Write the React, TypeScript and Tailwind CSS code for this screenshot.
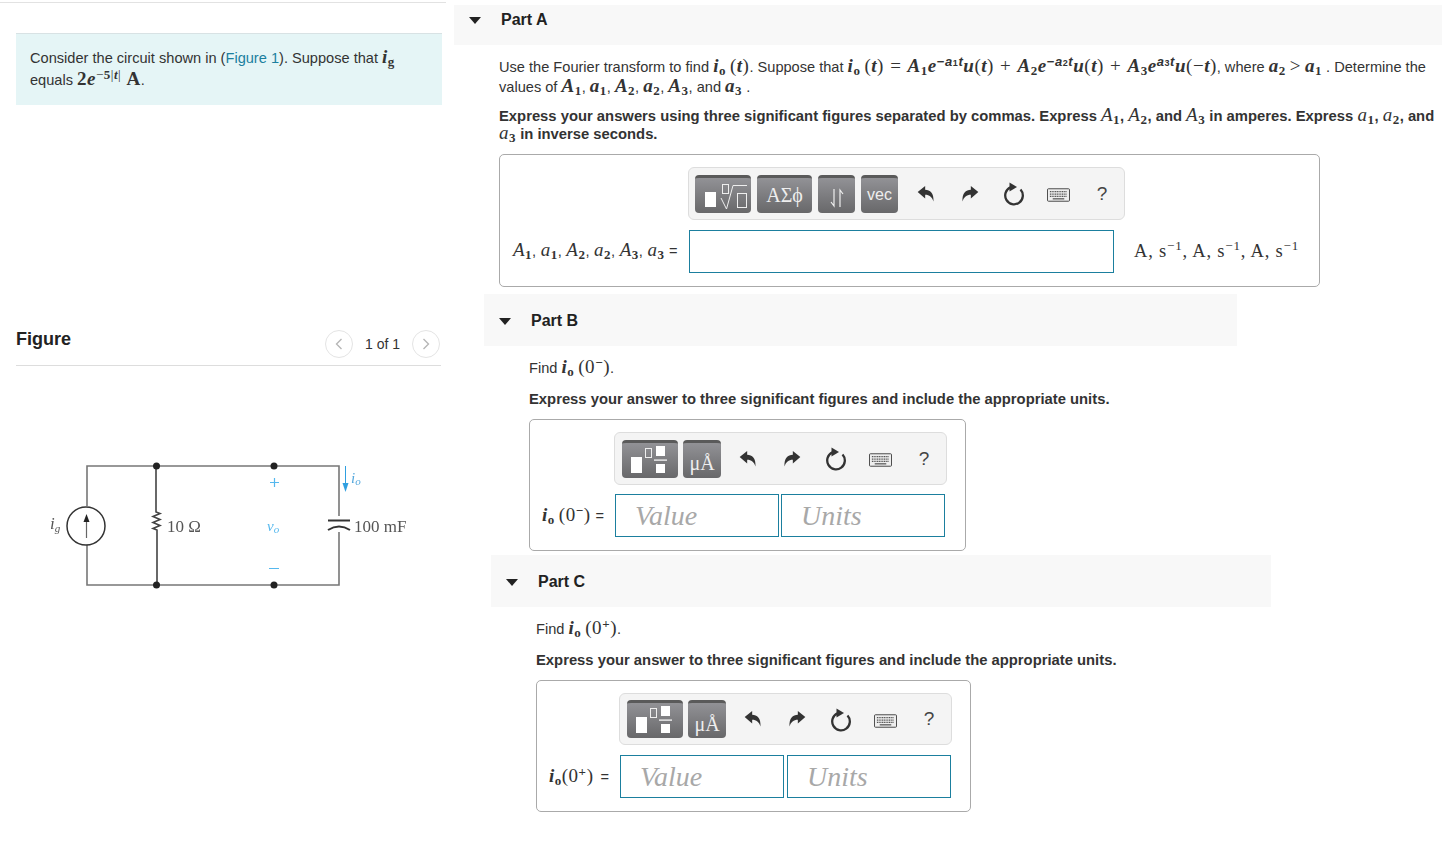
import type { ReactNode } from "react";

const serif = "font-['Liberation_Serif','Times_New_Roman',serif]";

// math text, roughly how MathJax draws it
function M({ children, bold = true }: { children: ReactNode; bold?: boolean }) {
  return (
    <span className={`font-['Liberation_Serif',serif] italic text-[19px] tracking-[0.5px] leading-[0] ${bold ? "font-bold" : "font-normal"}`}>
      {children}
    </span>
  );
}

function R({ children }: { children: ReactNode }) {
  return <span className="font-['Liberation_Serif',serif] not-italic text-[19px] tracking-[0.5px] leading-[0]">{children}</span>;
}

function Sub({ children }: { children: ReactNode }) {
  return <sub className="text-[13px] not-italic font-bold">{children}</sub>;
}

function Sup({ children }: { children: ReactNode }) {
  return <sup className="text-[13px] font-bold tracking-[0.6px]">{children}</sup>;
}

function Op({ children }: { children: ReactNode }) {
  return (
    <span className="mx-[1px]">
      <R>{children}</R>
    </span>
  );
}

function Undo() {
  return (
    <svg viewBox="0 0 24 24" className="w-[20px] h-[20px]" fill="#333">
      <path d="M2 9.5 11 2.5V7c6 0 10.5 4 10 14-1.600-5-5-8-10-8v4.500z" />
    </svg>
  );
}

function Redo() {
  return (
    <svg viewBox="0 0 24 24" className="w-[20px] h-[20px]" fill="#333">
      <path d="M22 9.500 13 2.500V7C7 7 2.500 11 3 21c1.600-5 5-8 10-8v4.500z" />
    </svg>
  );
}

function Reset() {
  return (
    <svg viewBox="0 0 24 24" className="w-[24px] h-[24px] mt-[1px]" fill="none" stroke="#333" strokeWidth="2.300">
      <path d="M18.500 7.500A8.800 8.800 0 1 1 8.500 5.400" />
      <path d="M7.500 0.500 15 5 7.500 9.500z" fill="#333" stroke="none" />
    </svg>
  );
}

function Keyboard() {
  return (
    <svg viewBox="0 0 24 14" className="w-[23px] h-[14px] mt-[3px]">
      <rect x="0.500" y="0.500" width="23" height="13" rx="1" fill="#eee" stroke="#444" />
      <path d="M3 3.500H21M3 6H21M3 8.500H21" stroke="#555" strokeWidth="1.300" strokeDasharray="1.200 .6" />
      <path d="M6 11H18" stroke="#555" strokeWidth="1.300" />
    </svg>
  );
}

function ToolIcons() {
  const cell = "w-[44px] flex items-center justify-center";
  return (
    <div className="flex items-center">
      <div className={cell}>
        <Undo />
      </div>
      <div className={cell}>
        <Redo />
      </div>
      <div className={cell}>
        <Reset />
      </div>
      <div className={cell}>
        <Keyboard />
      </div>
      <div className={cell}>
        <span className="text-[19px] text-[#444] mt-[1px]">?</span>
      </div>
    </div>
  );
}

function MathBtn({ className, children }: { className: string; children: ReactNode }) {
  return (
    <div
      className={`h-[38px] shrink-0 flex items-center justify-center rounded-[4px] border-t-[3px] border-t-[#5a5a5a] bg-linear-to-b from-[#929296] to-[#68686a] text-[#eee] overflow-hidden ${className}`}
    >
      {children}
    </div>
  );
}

function TemplateIcon() {
  return (
    <svg viewBox="0 0 56 35" className="w-[56px] h-[35px]">
      <rect x="9" y="14" width="11" height="16" fill="#fff" />
      <rect x="23.500" y="5.500" width="6" height="9" fill="none" stroke="#eee" />
      <rect x="34" y="3" width="9" height="10" fill="#fff" />
      <rect x="32" y="16.500" width="13" height="1.200" fill="#fff" />
      <rect x="34" y="21" width="9" height="9" fill="#fff" />
    </svg>
  );
}

function RootIcon() {
  return (
    <svg viewBox="0 0 56 35" className="w-[56px] h-[35px]">
      <rect x="10" y="14" width="11" height="15" fill="#fff" />
      <rect x="27.500" y="6.500" width="6" height="9" fill="none" stroke="#eee" />
      <path d="M26 20 31.500 31 38 7.500H52" fill="none" stroke="#eee" />
      <rect x="42.500" y="15.500" width="9" height="14" fill="none" stroke="#eee" />
    </svg>
  );
}

function ArrowsIcon() {
  return (
    <svg viewBox="0 0 18 22" className="w-[18px] h-[22px] mt-[6px]" fill="none" stroke="#eee" strokeWidth="1.200">
      <path d="M6 2V19L3 15" />
      <path d="M12 20V3L15 7" />
    </svg>
  );
}

function UnitBtns() {
  return (
    <>
      <MathBtn className="w-[56px]">
        <TemplateIcon />
      </MathBtn>
      <MathBtn className="w-[38px]">
        <span className={`${serif} text-[20px] pt-[6px]`}>μÅ</span>
      </MathBtn>
    </>
  );
}

function ValueUnits({ unitsGap }: { unitsGap: string }) {
  const cls = `w-[164px] h-[43px] border border-[#1b7f9e] px-[19px] outline-none ${serif} italic text-[28px] placeholder:text-[#a8a8a8]`;
  return (
    <div className={`flex ${unitsGap}`}>
      <input className={cls} placeholder="Value" />
      <input className={cls} placeholder="Units" />
    </div>
  );
}

function PartHeader({ label, className }: { label: string; className: string }) {
  return (
    <div className={`flex items-center bg-[#f8f8f8] ${className}`}>
      <span className="w-0 h-0 ml-[15px] border-x-[6.500px] border-x-transparent border-t-[7px] border-t-[#222]" />
      <span className="ml-[20px] font-bold text-[16px] text-[#222]">{label}</span>
    </div>
  );
}

function Circuit() {
  return (
    <svg viewBox="0 0 400 150" className="w-[400px] h-[150px] blur-[0.4px]">
      <g fill="none" stroke="#777" strokeWidth="1.600">
        <path d="M57 56V16H309V66M309 82V135H57V95" />
        <path d="M126 16V62l4 1.500-7 3 7 3-7 3 7 3-7 3 4 1.500V135" stroke="#444" />
        <path d="M298 70.500H320" stroke="#333" strokeWidth="2" />
        <path d="M298 80q11-7 22 0" stroke="#333" strokeWidth="2" />
      </g>
      <circle cx="56" cy="76" r="19" fill="none" stroke="#333" strokeWidth="1.500" />
      <path d="M56.500 88V72" stroke="#666" strokeWidth="1.200" />
      <path d="M56.500 64l-3 8h6z" fill="#222" />
      <g fill="#222">
        <circle cx="126.500" cy="16" r="3.500" />
        <circle cx="244" cy="16" r="3.500" />
        <circle cx="126.500" cy="135" r="3.500" />
        <circle cx="244" cy="135" r="3.500" />
      </g>
      <path d="M315.500 16V34" stroke="#2f9fe0" />
      <path d="M312.500 33h6l-3 9z" fill="#2f9fe0" />
      <path d="M240 32.500h9M244.500 28v9M239 118.500h10" stroke="#55b8ee" strokeWidth="1.200" />
      <g className="font-['Liberation_Serif',serif]" fontSize="17" fill="#555">
        <text x="137" y="82">10 Ω</text>
        <text x="324" y="82">100 mF</text>
        <text x="20" y="79" fontStyle="italic">i<tspan fontSize="11" dy="3">g</tspan></text>
        <text x="321" y="33" fontStyle="italic" fill="#55a8dd" fontSize="15">i<tspan fontSize="11" dy="2">o</tspan></text>
        <text x="237" y="81" fontStyle="italic" fill="#55b8ee" fontSize="15">v<tspan fontSize="11" dy="2">o</tspan></text>
      </g>
    </svg>
  );
}

export default function App() {
  return (
    <div className="flex h-[842px] overflow-hidden bg-white text-[#333] text-[14.6px] font-['Liberation_Sans',Arial,sans-serif]">
      {/* left column */}
      <div className="w-[454px] shrink-0 pt-[2px]">
        <div className="w-[446px] border-t border-[#e2e2e2]" />
        <div className="ml-[16px] mt-[30px] w-[426px] h-[72px] bg-[#e5f5f6] border-t border-[#d8e2e4] pl-[14px] pt-[13px] leading-[22px]">
          Consider the circuit shown in (<span className="text-[#1b7f9e]">Figure 1</span>). Suppose that{" "}
          <M>
            i<Sub>g</Sub>
          </M>
          <br />
          equals{" "}
          <R>
            <b>2</b>
            <M>e</M>
            <sup className="text-[13px]">
              −<b>5</b>|<i className="font-bold">t</i>|
            </sup>
            &nbsp;<b>A</b>
          </R>
          .
        </div>
        <div className="ml-[16px] mt-[222px] w-[425px] h-[39px] flex items-center border-b border-[#ddd] pb-[14px]">
          <span className="font-bold text-[18px] text-[#222]">Figure</span>
          <div className="ml-auto mr-[1px] flex items-center mt-[10px]">
            <span className="w-[28px] h-[28px] rounded-full border border-[#e4e4e4] flex items-center justify-center text-[#b5b5b5]">
              <svg viewBox="0 0 12 16" className="w-[10px] h-[14px]" fill="none" stroke="currentColor" strokeWidth="1.600">
                <path d="M9 2 3 8l6 6" />
              </svg>
            </span>
            <span className="mx-[12px] text-[14px]">1 of 1</span>
            <span className="w-[28px] h-[28px] rounded-full border border-[#e4e4e4] flex items-center justify-center text-[#b5b5b5]">
              <svg viewBox="0 0 12 16" className="w-[10px] h-[14px]" fill="none" stroke="currentColor" strokeWidth="1.600">
                <path d="m3 2 6 6-6 6" />
              </svg>
            </span>
          </div>
        </div>
        <div className="ml-[30px] mt-[84px]">
          <Circuit />
        </div>
      </div>

      {/* right column */}
      <div className="flex-1 pt-[5px]">
        <PartHeader label="Part A" className="w-[988px] h-[40px] pb-[10px]" />
        <div className="ml-[45px] mt-[12px] w-[945px] leading-[20px] whitespace-nowrap">
          Use the Fourier transform to find{" "}
          <M>
            i<Sub>o</Sub>
          </M>{" "}
          <R>(</R>
          <M>t</M>
          <R>)</R>. Suppose that{" "}
          <M>
            i<Sub>o</Sub>
          </M>{" "}
          <R>(</R>
          <M>t</M>
          <R>)</R>
          <Op> = </Op>
          <M>
            A<Sub>1</Sub>e
          </M>
          <Sup>
            −<i>a</i>
            <span className="text-[9px]">1</span>
            <i>t</i>
          </Sup>
          <M>u</M>
          <R>(</R>
          <M>t</M>
          <R>)</R>
          <Op> + </Op>
          <M>
            A<Sub>2</Sub>e
          </M>
          <Sup>
            −<i>a</i>
            <span className="text-[9px]">2</span>
            <i>t</i>
          </Sup>
          <M>u</M>
          <R>(</R>
          <M>t</M>
          <R>)</R>
          <Op> + </Op>
          <M>
            A<Sub>3</Sub>e
          </M>
          <Sup>
            <i>a</i>
            <span className="text-[9px]">3</span>
            <i>t</i>
          </Sup>
          <M>u</M>
          <R>(−</R>
          <M>t</M>
          <R>)</R>, where{" "}
          <M>
            a<Sub>2</Sub>
          </M>{" "}
          <R>&gt;</R>{" "}
          <M>
            a<Sub>1</Sub>
          </M>{" "}
          . Determine the
          <br />
          values of{" "}
          <M>
            A<Sub>1</Sub>
          </M>
          ,{" "}
          <M>
            a<Sub>1</Sub>
          </M>
          ,{" "}
          <M>
            A<Sub>2</Sub>
          </M>
          ,{" "}
          <M>
            a<Sub>2</Sub>
          </M>
          ,{" "}
          <M>
            A<Sub>3</Sub>
          </M>
          , and{" "}
          <M>
            a<Sub>3</Sub>
          </M>{" "}
          .
        </div>
        <p className="ml-[45px] mt-[10px] w-[945px] font-bold leading-[18px] text-[14.8px] text-[#333] whitespace-nowrap">
          Express your answers using three significant figures separated by commas. Express{" "}
          <M bold={false}>
            A<Sub>1</Sub>
          </M>
          ,{" "}
          <M bold={false}>
            A<Sub>2</Sub>
          </M>
          , and{" "}
          <M bold={false}>
            A<Sub>3</Sub>
          </M>{" "}
          in amperes. Express{" "}
          <M bold={false}>
            a<Sub>1</Sub>
          </M>
          ,{" "}
          <M bold={false}>
            a<Sub>2</Sub>
          </M>
          , and
          <br />
          <M bold={false}>
            a<Sub>3</Sub>
          </M>{" "}
          in inverse seconds.
        </p>
        <div className="ml-[45px] mt-[11px] w-[821px] h-[133px] border border-[#aaa] rounded-[5px]">
          <div className="ml-[188px] mt-[12px] w-[437px] h-[53px] flex items-center gap-[6px] pl-[6px] bg-[#f4f4f4] border border-[#ddd] rounded-[6px]">
            <MathBtn className="w-[56px]">
              <RootIcon />
            </MathBtn>
            <MathBtn className="w-[55px]">
              <span className={`${serif} text-[20px]`}>ΑΣϕ</span>
            </MathBtn>
            <MathBtn className="w-[37px]">
              <ArrowsIcon />
            </MathBtn>
            <MathBtn className="w-[37px]">
              <span className="text-[16px]">vec</span>
            </MathBtn>
            <ToolIcons />
          </div>
          <div className="flex items-center mt-[10px]">
            <div className="w-[189px] pl-[13px] pt-[1px] whitespace-nowrap [word-spacing:0.5px]">
              <M bold={false}>
                A<Sub>1</Sub>
              </M>
              ,{" "}
              <M bold={false}>
                a<Sub>1</Sub>
              </M>
              ,{" "}
              <M bold={false}>
                A<Sub>2</Sub>
              </M>
              ,{" "}
              <M bold={false}>
                a<Sub>2</Sub>
              </M>
              ,{" "}
              <M bold={false}>
                A<Sub>3</Sub>
              </M>
              ,{" "}
              <M bold={false}>
                a<Sub>3</Sub>
              </M>{" "}
              =
            </div>
            <input className="w-[425px] h-[43px] border border-[#1b7f9e] outline-none" />
            <span className={`ml-[20px] ${serif} text-[18.5px] tracking-[0.8px] whitespace-nowrap`}>
              A, s<sup className="text-[13px]">−1</sup>, A, s<sup className="text-[13px]">−1</sup>, A, s
              <sup className="text-[13px]">−1</sup>
            </span>
          </div>
        </div>

        <PartHeader label="Part B" className="ml-[30px] mt-[7px] w-[753px] h-[52px] pt-[2px]" />
        <div className="ml-[75px] mt-[12px] leading-[20px]">
          Find{" "}
          <M>
            i<Sub>o</Sub>
          </M>{" "}
          <R>
            (0<Sup>−</Sup>)
          </R>
          .
        </div>
        <p className="ml-[75px] mt-[11px] font-bold leading-[20px] text-[14.8px]">
          Express your answer to three significant figures and include the appropriate units.
        </p>
        <div className="ml-[75px] mt-[10px] w-[437px] h-[132px] border border-[#aaa] rounded-[5px]">
          <div className="ml-[84px] mt-[12px] w-[333px] h-[53px] flex items-center gap-[5px] pl-[7px] bg-[#f4f4f4] border border-[#ddd] rounded-[6px]">
            <UnitBtns />
            <ToolIcons />
          </div>
          <div className="flex items-center mt-[9px]">
            <div className="w-[85px] pl-[12px] pt-[3px] whitespace-nowrap">
              <M>
                i<Sub>o</Sub>
              </M>{" "}
              <R>
                (0<Sup>−</Sup>)
              </R>{" "}
              <span className="ml-[1px]">=</span>
            </div>
            <ValueUnits unitsGap="gap-[2px]" />
          </div>
        </div>

        <PartHeader label="Part C" className="ml-[37px] mt-[4px] w-[780px] h-[52px] pt-[2px]" />
        <div className="ml-[82px] mt-[12px] leading-[20px]">
          Find{" "}
          <M>
            i<Sub>o</Sub>
          </M>{" "}
          <R>
            (0<Sup>+</Sup>)
          </R>
          .
        </div>
        <p className="ml-[82px] mt-[11px] font-bold leading-[20px] text-[14.8px]">
          Express your answer to three significant figures and include the appropriate units.
        </p>
        <div className="ml-[82px] mt-[10px] w-[435px] h-[132px] border border-[#aaa] rounded-[5px]">
          <div className="ml-[82px] mt-[12px] w-[333px] h-[52px] flex items-center gap-[5px] pl-[7px] bg-[#f4f4f4] border border-[#ddd] rounded-[6px]">
            <UnitBtns />
            <ToolIcons />
          </div>
          <div className="flex items-center mt-[10px]">
            <div className="w-[83px] pl-[12px] pt-[3px] whitespace-nowrap">
              <M>
                i<Sub>o</Sub>
              </M>
              <R>
                (0<Sup>+</Sup>)
              </R>{" "}
              <span className="ml-[3px]">=</span>
            </div>
            <ValueUnits unitsGap="gap-[3px]" />
          </div>
        </div>
      </div>
    </div>
  );
}
